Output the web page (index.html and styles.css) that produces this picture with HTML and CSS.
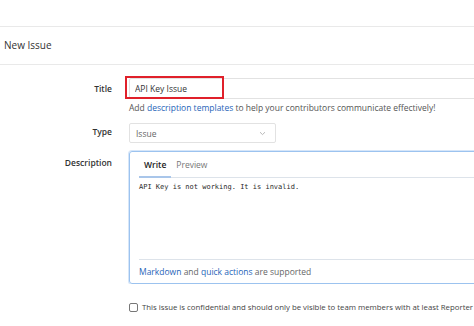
FILE: index.html
```html
<!DOCTYPE html>
<html lang="en">
<head>
    <meta charset="UTF-8">
    <meta name="viewport" content="width=device-width, initial-scale=1.0">
    <title>New Issue</title>
    <link rel="stylesheet" href="styles.css">
</head>
<body>
    <div class="page">
        <div class="page-title">New Issue</div>

        <form class="issue-form">
            <label class="form-label label-title" for="title">Title</label>
            <div class="form-field">
                <div class="title-wrap">
                    <input id="title" class="form-input" type="text" value="API Key Issue">
                    <span class="highlight"></span>
                </div>
                <p class="form-hint">Add <a href="#">description templates</a> to help your contributors communicate effectively!</p>
            </div>

            <label class="form-label label-type">Type</label>
            <div class="form-field">
                <div class="form-select">
                    <span>Issue</span>
                    <svg width="7" height="5" viewBox="0 0 7 5"><path d="M1 1.2 L3.5 3.6 L6 1.2" fill="none" stroke="#b0b0b0" stroke-width="0.9"/></svg>
                </div>
            </div>

            <label class="form-label label-desc">Description</label>
            <div class="form-field">
                <div class="md-area">
                    <div class="md-tabs">
                        <span class="md-tab active">Write</span>
                        <span class="md-tab">Preview</span>
                    </div>
                    <div class="md-text">API Key is not working. It is invalid.</div>
                    <div class="md-footer"><a href="#">Markdown</a> and <a href="#">quick actions</a> are supported</div>
                </div>
            </div>
        </form>

        <label class="confidential">
            <span class="checkbox"></span>
            This issue is confidential and should only be visible to team members with at least Reporter
        </label>
    </div>
</body>
</html>
```

FILE: styles.css
```css
body {
    margin: 0;
    font-family: "Open Sans", "Noto Sans", sans-serif;
    font-size: 8.5px;
    color: #303030;
    background: #fff;
    overflow: hidden;
}
a {
    color: #1f64b8;
    text-decoration: none;
}
.page {
    padding-top: 26px;
}
.page-title {
    border-top: 1px solid #e9e9e9;
    border-bottom: 1px solid #e9e9e9;
    height: 37px;
    line-height: 36px;
    padding-left: 4px;
    font-size: 10px;
    color: #333;
}
.issue-form {
    display: grid;
    grid-template-columns: 112px 1fr;
    column-gap: 17px;
    margin-top: 11px;
    padding-top: 3px;
    overflow: hidden;
}
.form-label {
    text-align: right;
    font-weight: 600;
    line-height: 12px;
    color: #333;
}
.label-title {
    padding-top: 4px;
}
.label-type {
    padding-top: 11px;
}
.label-desc {
    padding-top: 14px;
}
.form-field {
    min-width: 0;
}
.title-wrap {
    position: relative;
}
.form-input {
    display: block;
    box-sizing: border-box;
    width: calc(100% + 20px);
    height: 21px;
    border: 1px solid #e2e2e2;
    border-radius: 2px;
    padding: 0 5px;
    font: inherit;
    color: #333;
    margin-top: -1px;
    outline: none;
}
.highlight {
    position: absolute;
    left: -4px;
    top: -2px;
    width: 99px;
    height: 23px;
    box-sizing: border-box;
    border: 2px solid #e0202a;
}
.form-hint {
    margin: 2px 0 0;
    line-height: 14px;
    color: #555;
    white-space: nowrap;
}
.form-select {
    display: flex;
    align-items: center;
    justify-content: space-between;
    box-sizing: border-box;
    width: 147px;
    height: 20px;
    margin-top: 8px;
    padding: 0 9px 0 6px;
    border: 1px solid #e2e2e2;
    border-radius: 2px;
    color: #666;
}
.md-area {
    margin-top: 8px;
    width: calc(100% + 20px);
    height: 133px;
    box-sizing: border-box;
    border: 1px solid #9cc3ef;
    border-radius: 3px;
    box-shadow: 0 0 0 1px #d6e6f9;
    padding: 0 9px;
    display: flex;
    flex-direction: column;
}
.md-tabs {
    display: flex;
    border-bottom: 1px solid #dde3ea;
    height: 25px;
}
.md-tab {
    padding: 0 5px;
    line-height: 25px;
    color: #777;
}
.md-tab.active {
    color: #222;
    font-weight: 600;
    border-bottom: 2px solid #a9c6ea;
    margin-bottom: -1px;
}
.md-text {
    flex: 1;
    padding-top: 4px;
    line-height: 10px;
    font-family: "DejaVu Sans Mono", "Liberation Mono", monospace;
    font-size: 7px;
    color: #2a2a2a;
    border-bottom: 1px solid #dde3ea;
}
.md-footer {
    height: 23px;
    line-height: 23px;
    color: #666;
}
.confidential {
    display: flex;
    align-items: center;
    gap: 4px;
    margin: 17px 0 0 129px;
    line-height: 12px;
    font-size: 7.8px;
    color: #444;
    white-space: nowrap;
    overflow: hidden;
}
.checkbox {
    flex: none;
    width: 7px;
    height: 7px;
    border: 1px solid #777;
    border-radius: 2px;
}
```
